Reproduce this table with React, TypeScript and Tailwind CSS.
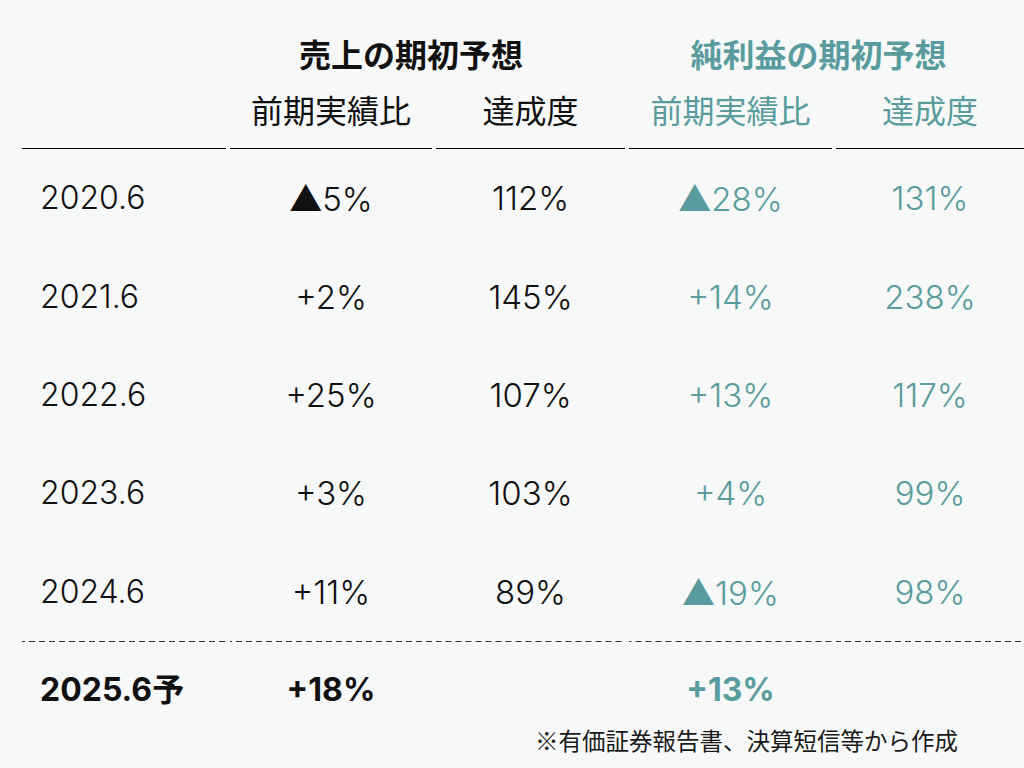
const TEAL = "text-[#5a9c9e]";

type Row = {
  year: string;
  salesYoY: string;
  salesRate: string;
  profitYoY: string;
  profitRate: string;
};

const rows: Row[] = [
  { year: "2020.6", salesYoY: "▲5%", salesRate: "112%", profitYoY: "▲28%", profitRate: "131%" },
  { year: "2021.6", salesYoY: "+2%", salesRate: "145%", profitYoY: "+14%", profitRate: "238%" },
  { year: "2022.6", salesYoY: "+25%", salesRate: "107%", profitYoY: "+13%", profitRate: "117%" },
  { year: "2023.6", salesYoY: "+3%", salesRate: "103%", profitYoY: "+4%", profitRate: "99%" },
  { year: "2024.6", salesYoY: "+11%", salesRate: "89%", profitYoY: "▲19%", profitRate: "98%" },
];

// draws a leading ▲ in the CJK font so it comes out full width like the reference
function Value({ text }: { text: string }) {
  if (text.startsWith("▲")) {
    return (
      <span>
        <span className="font-['Noto_Sans_CJK_JP',sans-serif]">▲</span>
        {text.slice(1)}
      </span>
    );
  }
  return <span>{text}</span>;
}

const cell = "flex h-[98.4px] items-center justify-center text-[33px] font-light";
const dashed =
  "bg-[linear-gradient(to_right,#333_60%,transparent_60%)] bg-[length:10px_1px] bg-repeat-x bg-top";

export default function App() {
  return (
    <div className="h-[768px] w-[1024px] overflow-hidden bg-[#f7f9f9] font-['Inter','Noto_Sans_CJK_JP',sans-serif] text-[#111]">
      <div className="grid grid-cols-[204px_202px_189px_203px_188px] gap-x-[4px] pl-[22px] pt-[36px] text-[32px] leading-[40px]">
        {/* Group titles */}
        <div />
        <div className="col-span-2 pr-[33px] text-center font-bold">売上の期初予想</div>
        <div className={`col-span-2 pr-[16px] text-center font-bold ${TEAL}`}>純利益の期初予想</div>

        {/* Sub headers */}
        <div className="h-[73px] border-b border-black" />
        <div className="h-[73px] border-b border-black pt-[16px] text-center">前期実績比</div>
        <div className="h-[73px] border-b border-black pt-[16px] text-center">達成度</div>
        <div className={`h-[73px] border-b border-black pt-[16px] text-center ${TEAL}`}>前期実績比</div>
        <div className={`h-[73px] border-b border-black pt-[16px] text-center ${TEAL}`}>達成度</div>

        {/* Results */}
        {rows.map((r) => (
          <div key={r.year} className="contents">
            <div className="flex h-[98.4px] items-center pl-[18px] text-[32px] font-light">{r.year}</div>
            <div className={cell}>
              <Value text={r.salesYoY} />
            </div>
            <div className={cell}>{r.salesRate}</div>
            <div className={`${cell} ${TEAL}`}>
              <Value text={r.profitYoY} />
            </div>
            <div className={`${cell} ${TEAL}`}>{r.profitRate}</div>
          </div>
        ))}

        {/* Forecast */}
        <div className={`h-[69px] pl-[18px] pt-[29px] font-bold ${dashed}`}>2025.6予</div>
        <div className={`h-[69px] pt-[29px] text-center font-bold ${dashed}`}>+18%</div>
        <div className={`h-[69px] ${dashed}`} />
        <div className={`h-[69px] pt-[29px] text-center font-bold ${TEAL} ${dashed}`}>+13%</div>
        <div className={`h-[69px] ${dashed}`} />
      </div>

      <p className="mt-[15px] pr-[66px] text-right font-['Noto_Sans_CJK_JP',sans-serif] text-[23.5px] leading-[30px] text-[#1a1a1a]">
        ※有価証券報告書、決算短信等から作成
      </p>
    </div>
  );
}
